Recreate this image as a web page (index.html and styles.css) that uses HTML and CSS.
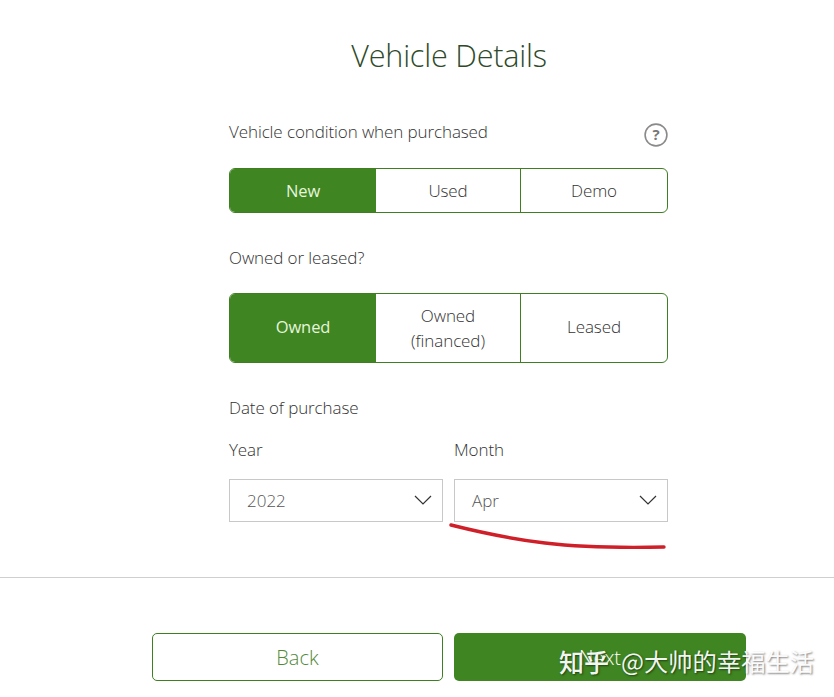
FILE: index.html
```html
<!DOCTYPE html>
<html lang="en">
<head>
<meta charset="utf-8">
<title>Vehicle Details</title>
<link rel="stylesheet" href="styles.css">
</head>
<body>
<main class="page">
  <h1 class="title">Vehicle Details</h1>
  <form class="form">
    <div class="label-row">
      <span class="label">Vehicle condition when purchased</span>
      <svg class="help" width="24" height="24" viewBox="0 0 24 24" aria-hidden="true"><circle cx="12" cy="12" r="10.9" fill="none" stroke="#8a8a8a" stroke-width="1.6"/><text x="12" y="17" text-anchor="middle" class="help-mark">?</text></svg>
    </div>
    <div class="segments seg-short">
      <div class="seg seg-on seg-first">New</div>
      <div class="seg seg-mid">Used</div>
      <div class="seg seg-last">Demo</div>
    </div>
    <div class="label owned-label">Owned or leased?</div>
    <div class="segments seg-tall">
      <div class="seg seg-on seg-first seg-single">Owned</div>
      <div class="seg seg-mid">Owned<br>(financed)</div>
      <div class="seg seg-last seg-single">Leased</div>
    </div>
    <div class="label date-label">Date of purchase</div>
    <div class="date-grid">
      <div class="field">
        <div class="label">Year</div>
        <div class="select"><span>2022</span><svg class="chev" width="18" height="10" viewBox="0 0 18 10" aria-hidden="true"><path d="M1 1l8 8 8-8" fill="none" stroke="#333" stroke-width="1.2"/></svg></div>
      </div>
      <div class="field">
        <div class="label">Month</div>
        <div class="select"><span>Apr</span><svg class="chev" width="18" height="10" viewBox="0 0 18 10" aria-hidden="true"><path d="M1 1l8 8 8-8" fill="none" stroke="#333" stroke-width="1.2"/></svg></div>
      </div>
    </div>
  </form>
  <hr class="rule">
  <div class="actions">
    <button class="btn btn-back" type="button">Back</button>
    <button class="btn btn-next" type="button">Next</button>
  </div>
</main>
<svg class="scribble" width="224" height="30" viewBox="0 0 224 30" aria-hidden="true"><path d="M2 3C30 10 62 17 96 21C130 25 170 26 215 25" fill="none" stroke="#cf1f28" stroke-width="3.4" stroke-linecap="round"/></svg>
<div class="watermark"><span class="wm-brand">知乎</span><span class="wm-handle">@大帅的幸福生活</span></div>
</body>
</html>
```
FILE: styles.css
```css
* { box-sizing: border-box; }
html, body { margin: 0; padding: 0; background: #fff; }
body {
  position: relative;
  width: 834px;
  height: 697px;
  overflow: hidden;
  font-family: "Open Sans", "Liberation Sans", sans-serif;
  font-weight: 300;
  color: #333;
}
.page { display: flex; flex-direction: column; }
.title {
  margin: 36px 0 0 64px;
  text-align: center;
  font-size: 30.6px;
  line-height: 38px;
  font-weight: 300;
  color: #2f4a2a;
  letter-spacing: -0.2px;
}
.form { width: 439px; margin: 0 0 0 229px; display: flex; flex-direction: column; }
.label { font-size: 17px; line-height: 22px; letter-spacing: -0.1px; color: #333; }
.label-row { display: flex; justify-content: space-between; align-items: flex-start; margin-top: 47px; }
.help { flex: none; margin-top: 2px; }
.help-mark { font-family: "Open Sans", sans-serif; font-size: 15px; font-weight: 700; fill: #777; }
.segments { display: grid; grid-template-columns: 146px 145px 146px; margin-top: 21px; border: 1px solid #3f7f22; border-radius: 6px; overflow: hidden; }
.seg-short { height: 45px; }
.seg-tall { height: 70px; margin-top: 24px; }
.seg { display: flex; align-items: center; justify-content: center; text-align: center; font-size: 17px; line-height: 25px; letter-spacing: -0.1px; color: #333; }
.seg-single { padding-bottom: 3px; }
.seg-on { background: #3f8522; color: #e6f5dc; font-weight: 400; font-size: 16.5px; }
.seg-mid { border-right: 1px solid #3f7f22; }
.owned-label { margin-top: 34px; }
.date-label { margin-top: 34px; }
.date-grid { display: grid; grid-template-columns: 214px 214px; column-gap: 11px; margin-top: 20px; }
.select {
  display: flex;
  justify-content: space-between;
  align-items: center;
  height: 43px;
  margin-top: 18px;
  padding: 0 16px 0 17px;
  border: 1px solid #c8c8c8;
  font-size: 17px;
  color: #555;
}
.chev { margin-top: -1px; margin-right: -6px; }
.rule { margin: 55px 0 0; border: 0; border-top: 1px solid #cfcfcf; height: 0; }
.actions { display: flex; gap: 11px; margin: 55px 0 0 152px; }
.btn { font: inherit; font-size: 20px; border-radius: 5px; height: 48px; padding: 0; }
.btn-back { width: 291px; background: #fff; border: 1px solid #3f7f22; color: #4f8a37; }
.btn-next { width: 292px; background: #3f8522; border: 0; color: #fff; }
.scribble { position: absolute; left: 449px; top: 522px; }
.watermark {
  position: absolute;
  left: 559px;
  top: 644px;
  display: flex;
  gap: 12px;
  white-space: nowrap;
  font-family: "Noto Sans CJK SC", sans-serif;
  line-height: 34px;
  font-weight: 400;
  color: rgba(255, 255, 255, 0.95);
  text-shadow: 1px 1px 2px rgba(0, 0, 0, 0.5);
}
.wm-brand { font-weight: 500; font-size: 25px; }
.wm-handle { font-size: 24.3px; }
```
